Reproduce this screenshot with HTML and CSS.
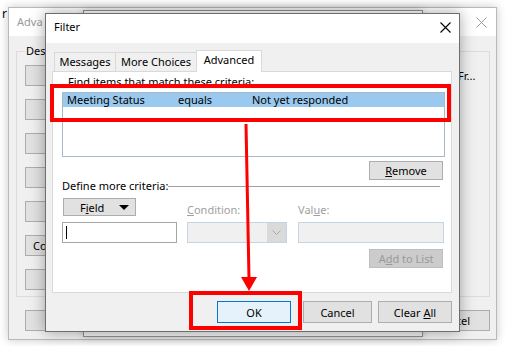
FILE: index.html
```html
<!DOCTYPE html>
<html>
<head>
<meta charset="utf-8">
<link rel="stylesheet" href="styles.css">
</head>
<body>
<div class="stray">r</div>

<div class="win back">
  <div class="back-tb">
    <span>Adva</span>
    <svg class="xicon" width="11" height="11" viewBox="0 0 11 11"><path d="M0.5 0.5L10.5 10.5M10.5 0.5L0.5 10.5" stroke="#9a9a9a" stroke-width="1" fill="none"/></svg>
  </div>
  <div class="back-body">
    <fieldset class="group">
      <legend>Desc</legend>
      <div class="group-inner">
        <div class="bcol">
          <div class="bbtn"></div>
          <div class="bbtn"></div>
          <div class="bbtn"></div>
          <div class="bbtn"></div>
          <div class="bbtn"></div>
          <div class="bbtn txt">Co</div>
          <div class="bbtn"></div>
        </div>
        <div class="fr">Fr...</div>
      </div>
    </fieldset>
    <div class="back-foot">
      <div class="bbtn"></div>
      <div class="bbtn center">Cancel</div>
    </div>
  </div>
</div>

<div class="win middle">
  <div class="mid-tb"></div>
</div>

<div class="win filter">
  <div class="f-tb">
    <span>Filter</span>
    <svg class="xicon" width="11" height="11" viewBox="0 0 11 11"><path d="M0.5 0.5L10.5 10.5M10.5 0.5L0.5 10.5" stroke="#000" stroke-width="1.1" fill="none"/></svg>
  </div>
  <div class="f-body">
    <div class="tabs">
      <div class="tab t1">Messages</div>
      <div class="tab t2">More Choices</div>
      <div class="tab t3 sel">Advanced</div>
    </div>
    <div class="panel">
      <div class="find-label">Find items that match these criteria:</div>
      <div class="listbox">
        <div class="lrow"><span>Meeting Status</span><span>equals</span><span>Not yet responded</span></div>
      </div>
      <div class="rrow"><div class="btn"><span><u>R</u>emove</span></div></div>
      <div class="sep"><span>Define more criteria:</span><span class="line"></span></div>
      <div class="crit">
        <div class="btn field"><span class="ftxt">F<u>i</u>eld</span><span class="tri"></span></div>
        <div class="dlabel"><u>C</u>ondition:</div>
        <div class="dlabel">Val<u>u</u>e:</div>
        <div class="tinput"><span class="caret"></span></div>
        <div class="combo"><span class="drop"><svg width="9" height="6" viewBox="0 0 9 6"><path d="M0.5 0.5L4.5 4.5L8.5 0.5" stroke="#a8a8a8" stroke-width="1" fill="none"/></svg></span></div>
        <div class="dinput"></div>
      </div>
      <div class="rrow add-row"><div class="btn disabled"><span>A<u>d</u>d to List</span></div></div>
    </div>
    <div class="f-foot">
      <div class="btn ok"><span>OK</span></div>
      <div class="btn cancel"><span>Cancel</span></div>
      <div class="btn clear"><span>Clear <u>A</u>ll</span></div>
    </div>
  </div>
</div>

<div class="hl hl-list"></div>
<div class="hl hl-ok"></div>
<svg class="arrow" width="510" height="346" viewBox="0 0 510 346">
  <path d="M246 124 L249 279" stroke="#ff0000" stroke-width="3" fill="none"/>
  <polygon points="241,277 257,277 249,291" fill="#ff0000"/>
</svg>
</body>
</html>
```

FILE: styles.css
```css
html, body {
  margin: 0;
  padding: 0;
}
body {
  width: 510px;
  height: 346px;
  overflow: hidden;
  background: #ffffff;
  font-family: "Noto Sans", sans-serif;
  font-size: 11px;
  color: #000;
  position: relative;
}
u { text-decoration: underline; text-underline-offset: 1px; }

.stray {
  position: absolute;
  left: 2px;
  top: 6px;
  font-size: 12px;
  line-height: 16px;
}

.win {
  position: absolute;
  box-sizing: border-box;
}

/* back window */
.back {
  left: 8px;
  top: 7px;
  width: 489px;
  height: 333px;
  border: 1px solid #b9b9b9;
  background: #f0f0f0;
  box-shadow: 0 0 9px rgba(0,0,0,0.22);
  display: flex;
  flex-direction: column;
}
.back-tb {
  height: 28px;
  flex: none;
  background: #fff;
  line-height: 28px;
  padding: 0 9px 0 8px;
  color: #9a9a9a;
  display: flex;
  justify-content: space-between;
  align-items: center;
}
.back-body {
  flex: 1;
  padding: 8px 6px 0 7px;
  display: flex;
  flex-direction: column;
}
.group {
  margin: 0;
  box-sizing: border-box;
  height: 253px;
  border: 1px solid #dcdcdc;
  padding: 0 0 0 8px;
}
.group legend {
  padding: 0 1px;
  line-height: 14px;
  color: #000;
}
.group-inner {
  display: flex;
  padding-top: 7px;
}
.bcol {
  display: flex;
  flex-direction: column;
  gap: 13px;
}
.bbtn {
  width: 74px;
  height: 21px;
  box-sizing: border-box;
  border: 1px solid #adadad;
  background: #e1e1e1;
  line-height: 19px;
}
.bbtn.txt { padding-left: 7px; }
.bbtn.center { text-align: center; }
.fr {
  margin-left: 359px;
  margin-top: 4px;
  line-height: 14px;
}
.back-foot {
  margin-top: 13px;
  padding-left: 9px;
  display: flex;
  justify-content: space-between;
}

/* middle window */
.middle {
  left: 83px;
  top: 10px;
  width: 340px;
  height: 327px;
  border: 1px solid #8f8f8f;
  background: #f0f0f0;
  box-shadow: 0 0 8px rgba(0,0,0,0.2);
}
.mid-tb {
  height: 30px;
  background: #fff;
}

/* filter dialog */
.filter {
  left: 45px;
  top: 13px;
  width: 415px;
  height: 319px;
  border: 1px solid #6e6e6e;
  background: #f0f0f0;
  box-shadow: 0 0 14px rgba(0,0,0,0.35);
  display: flex;
  flex-direction: column;
}
.f-tb {
  height: 29px;
  flex: none;
  background: #fff;
  padding: 0 8px 3px 8px;
  box-sizing: border-box;
  display: flex;
  justify-content: space-between;
  align-items: center;
  line-height: 26px;
}
.f-body {
  flex: 1;
  padding: 7px 7px 0 6px;
  display: flex;
  flex-direction: column;
}
.tabs {
  height: 21px;
  display: flex;
  align-items: flex-end;
  padding-left: 2px;
}
.tab {
  box-sizing: border-box;
  height: 19px;
  border: 1px solid #d9d9d9;
  border-bottom: none;
  line-height: 18px;
  text-align: center;
  background: #f0f0f0;
}
.t1 { width: 62px; }
.t2 { width: 82px; margin-left: -1px; }
.t3 { width: 66px; margin-left: -1px; }
.tab.sel {
  height: 22px;
  margin-bottom: -1px;
  background: #fff;
  position: relative;
  z-index: 2;
}

.panel {
  box-sizing: border-box;
  height: 222px;
  background: #fff;
  border: 1px solid #d9d9d9;
  display: flex;
  flex-direction: column;
}
.find-label {
  box-sizing: border-box;
  height: 20px;
  padding: 2px 0 0 15px;
  line-height: 16px;
}
.listbox {
  margin-left: 9px;
  width: 383px;
  height: 65px;
  box-sizing: border-box;
  border: 1px solid #a9b7c6;
}
.lrow {
  height: 14px;
  line-height: 14px;
  background: #99c9ef;
  display: grid;
  grid-template-columns: 111px 74px auto;
  padding-left: 4px;
}
.rrow {
  display: flex;
  justify-content: flex-end;
  padding-right: 8px;
  margin-top: 4px;
}
.btn {
  box-sizing: border-box;
  border: 1px solid #adadad;
  background: #e1e1e1;
  display: flex;
  align-items: center;
  justify-content: center;
  width: 74px;
  height: 19px;
  line-height: 17px;
  white-space: nowrap;
}
.sep {
  height: 12px;
  display: flex;
  align-items: center;
  padding-left: 9px;
  line-height: 12px;
}
.sep .line {
  flex: 1;
  height: 1px;
  background: #a0a0a0;
  margin-right: 11px;
}
.crit {
  margin: 6px 0 0 9px;
  display: grid;
  grid-template-columns: 125px 111px 146px;
  grid-template-rows: 18px 21px;
  row-gap: 6px;
}
.btn.field {
  margin-left: 1px;
  width: 73px;
  height: 18px;
  justify-content: space-between;
  padding: 0 6px 0 16px;
}
.tri {
  width: 0;
  height: 0;
  border-left: 5px solid transparent;
  border-right: 5px solid transparent;
  border-top: 5px solid #000;
}
.dlabel {
  align-self: end;
  line-height: 14px;
  margin-bottom: -1px;
  color: #a0a0a0;
}
.tinput {
  width: 115px;
  height: 21px;
  box-sizing: border-box;
  border: 1px solid #a6a6a6;
  background: #fff;
  display: flex;
  align-items: center;
  padding-left: 3px;
}
.caret {
  width: 1px;
  height: 13px;
  background: #000;
}
.combo {
  width: 100px;
  height: 21px;
  box-sizing: border-box;
  border: 1px solid #c5d4e3;
  background: #f0f0f0;
  display: flex;
  justify-content: flex-end;
}
.drop {
  width: 19px;
  background: #dadada;
  display: flex;
  align-items: center;
  justify-content: center;
}
.dinput {
  width: 146px;
  height: 21px;
  box-sizing: border-box;
  border: 1px solid #c5d4e3;
  background: #f0f0f0;
}
.add-row { margin-top: 6px; }
.btn.disabled {
  background: #cccccc;
  border-color: #bfbfbf;
  color: #9a9a9a;
}

.f-foot {
  margin-top: 8px;
  display: flex;
  justify-content: flex-end;
}
.f-foot .btn { height: 22px; }
.btn.ok {
  width: 74px;
  border-color: #0078d7;
  background: #e5f1fb;
}
.btn.cancel {
  width: 69px;
  margin-left: 12px;
}
.btn.clear {
  width: 74px;
  margin-left: 6px;
}

/* overlays */
.hl {
  position: absolute;
  box-sizing: border-box;
  border: 4px solid #ff0000;
}
.hl-list {
  left: 50px;
  top: 84px;
  width: 401px;
  height: 38px;
}
.hl-ok {
  left: 189px;
  top: 291px;
  width: 113px;
  height: 39px;
}
.arrow {
  position: absolute;
  left: 0;
  top: 0;
}
```
